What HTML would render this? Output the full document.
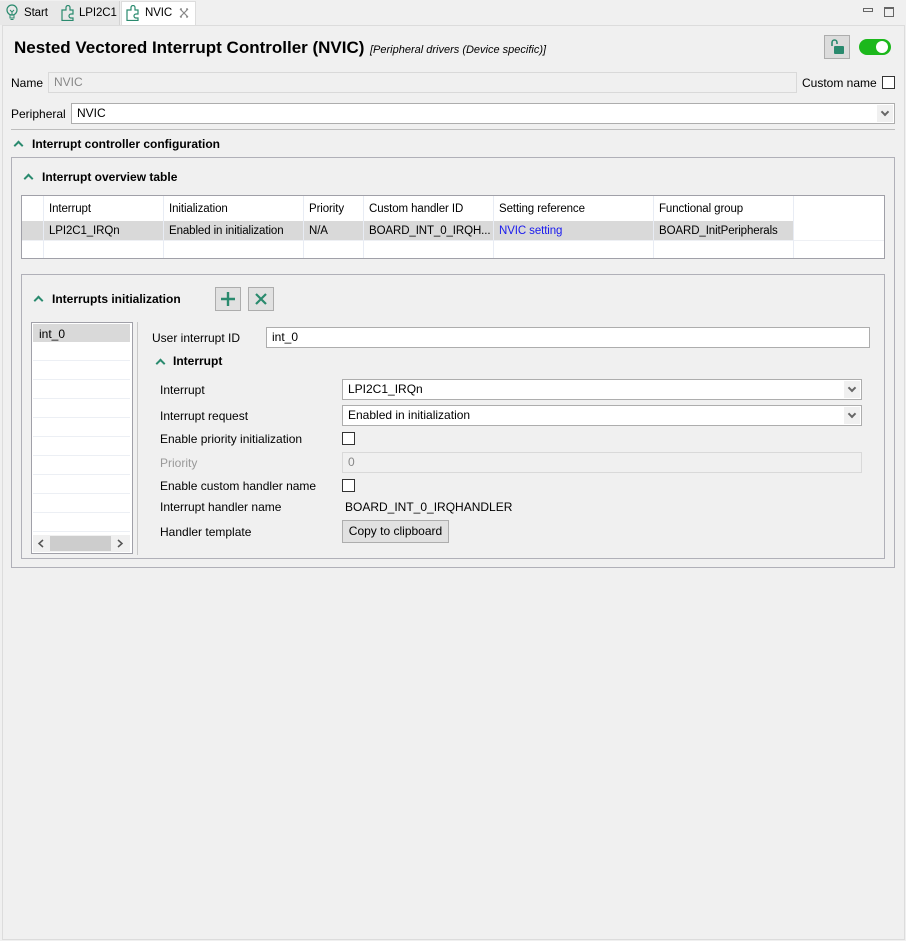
<!DOCTYPE html>
<html><head><meta charset="utf-8"><style>
*{box-sizing:border-box;margin:0;padding:0}
body{width:906px;height:941px;background:#f0f0f0;font-family:"Liberation Sans",sans-serif;font-size:12px;color:#000;position:relative;overflow:hidden}
.a{position:absolute;white-space:nowrap}
.inp{position:absolute;background:#fff;border:1px solid #adadad;height:21px;padding:2px 5px;line-height:15px}
.dis{background:#f0f0f0;border-color:#d9d9d9;color:#888}
.cb{position:absolute;width:13px;height:13px;border:1px solid #333;background:#fff}
.dd{position:absolute;right:1px;top:1px;bottom:1px;width:16px;background:#f0f0f0}
.dd:after{content:"";position:absolute;left:5px;top:4px;width:4px;height:4px;border-right:2px solid #666;border-bottom:2px solid #666;transform:rotate(45deg)}
.chev{position:absolute;width:7px;height:7px;border-left:2.5px solid #2a8a6e;border-top:2.5px solid #2a8a6e;transform:rotate(45deg)}
.b{font-weight:bold}
.lbl{position:absolute;left:160px}
.t{font-size:11.5px;letter-spacing:-0.1px;margin-top:1px}
</style></head><body>
<div class="a" style="left:0;top:0;width:906px;height:25px;background:#f0f0f0"></div>
<div class="a" style="left:0;top:1px;width:120px;height:24px;background:#e8e8e8;border-right:1px solid #d4d4d4"></div>
<div class="a" style="left:121px;top:1px;width:75px;height:25px;background:#fff;border:1px solid #ddd;border-bottom:none"></div>
<svg class="a" style="left:6px;top:4px" width="12" height="17" viewBox="0 0 12 17"><circle cx="6" cy="6" r="5" fill="none" stroke="#2a8a6e" stroke-width="1.2"/><path d="M4 11v3h4v-3M4.5 15.5h3M4 6l2 2 2-2M6 8v3" fill="none" stroke="#2a8a6e" stroke-width="1"/></svg>
<span class="a t" style="left:24px;top:6px">Start</span>
<svg class="a" style="left:61px;top:5px" width="14" height="16" viewBox="0 0 14 16"><path d="M1 5h4V2.5a2 2 0 0 1 4 0V5h3v4h-2a2 2 0 0 0 0 4h2v2.5H1z" fill="none" stroke="#2a8a6e" stroke-width="1.2"/></svg>
<span class="a t" style="left:79px;top:6px">LPI2C1</span>
<svg class="a" style="left:126px;top:5px" width="14" height="16" viewBox="0 0 14 16"><path d="M1 5h4V2.5a2 2 0 0 1 4 0V5h3v4h-2a2 2 0 0 0 0 4h2v2.5H1z" fill="none" stroke="#2a8a6e" stroke-width="1.2"/></svg>
<span class="a t" style="left:145px;top:6px">NVIC</span>
<svg class="a" style="left:179px;top:8px" width="10" height="10" viewBox="0 0 10 10"><path d="M1 1l8 8M9 1L1 9M1 1h2M7 1h2M1 9h2M7 9h2" stroke="#888" stroke-width="1.2"/></svg>
<div class="a" style="left:863px;top:8px;width:10px;height:4px;border:1px solid #666"></div>
<div class="a" style="left:884px;top:7px;width:10px;height:10px;border:1px solid #666;border-top-width:2px"></div>
<div class="a" style="left:2px;top:25px;width:903px;height:915px;border:1px solid #dcdcdc;background:#f0f0f0"></div>
<span class="a b" style="left:14px;top:38px;font-size:17px">Nested Vectored Interrupt Controller (NVIC)</span>
<span class="a" style="left:370px;top:44px;font-style:italic;font-size:11px">[Peripheral drivers (Device specific)]</span>
<div class="a" style="left:824px;top:35px;width:26px;height:24px;border:1px solid #adadad;background:#dcdcdc"></div>
<svg class="a" style="left:829px;top:38px" width="16" height="18" viewBox="0 0 16 18"><path d="M3 8V4.5a2.5 2.5 0 0 1 5 0V6" fill="none" stroke="#2a8a6e" stroke-width="1.6"/><rect x="5" y="8" width="10" height="8" rx="1" fill="#2a8a6e"/></svg>
<div class="a" style="left:859px;top:39px;width:32px;height:16px;border-radius:8px;background:#1cb81c"></div>
<div class="a" style="left:876px;top:41px;width:12px;height:12px;border-radius:6px;background:#fff"></div>
<span class="a" style="left:11px;top:76px">Name</span>
<div class="inp dis" style="left:48px;top:72px;width:749px">NVIC</div>
<span class="a" style="left:802px;top:76px">Custom name</span>
<div class="cb" style="left:882px;top:76px"></div>
<span class="a" style="left:11px;top:107px">Peripheral</span>
<div class="inp" style="left:71px;top:103px;width:824px">NVIC<div class="dd"></div></div>
<div class="a" style="left:11px;top:129px;width:884px;height:1px;background:#bdbdbd"></div>
<div class="chev" style="left:15px;top:142px"></div>
<span class="a b" style="left:32px;top:137px">Interrupt controller configuration</span>
<div class="a" style="left:11px;top:157px;width:884px;height:411px;border:1px solid #b0b0b8"></div>
<div class="chev" style="left:25px;top:175px"></div>
<span class="a b" style="left:42px;top:170px">Interrupt overview table</span>
<div class="a" style="left:21px;top:195px;width:864px;height:64px;border:1px solid #a0a0a8;background:#fff"></div>
<div class="a" style="left:22px;top:221px;width:771px;height:19px;background:#d9d9d9"></div>
<div class="a" style="left:22px;top:240px;width:862px;height:1px;background:#eef0f4"></div>
<div class="a" style="left:43px;top:196px;width:1px;height:62px;background:#e8ecf4"></div>
<div class="a" style="left:163px;top:196px;width:1px;height:62px;background:#e8ecf4"></div>
<div class="a" style="left:303px;top:196px;width:1px;height:62px;background:#e8ecf4"></div>
<div class="a" style="left:363px;top:196px;width:1px;height:62px;background:#e8ecf4"></div>
<div class="a" style="left:493px;top:196px;width:1px;height:62px;background:#e8ecf4"></div>
<div class="a" style="left:653px;top:196px;width:1px;height:62px;background:#e8ecf4"></div>
<div class="a" style="left:793px;top:196px;width:1px;height:62px;background:#e8ecf4"></div>
<span class="a t" style="left:49px;top:202px">Interrupt</span>
<span class="a t" style="left:169px;top:202px">Initialization</span>
<span class="a t" style="left:309px;top:202px">Priority</span>
<span class="a t" style="left:369px;top:202px">Custom handler ID</span>
<span class="a t" style="left:499px;top:202px">Setting reference</span>
<span class="a t" style="left:659px;top:202px">Functional group</span>
<span class="a t" style="left:49px;top:224px">LPI2C1_IRQn</span>
<span class="a t" style="left:169px;top:224px">Enabled in initialization</span>
<span class="a t" style="left:309px;top:224px">N/A</span>
<span class="a t" style="left:369px;top:224px;width:122px;overflow:hidden">BOARD_INT_0_IRQH...</span>
<span class="a t" style="left:499px;top:224px;color:#1a1aee">NVIC setting</span>
<span class="a t" style="left:659px;top:224px">BOARD_InitPeripherals</span>
<div class="a" style="left:21px;top:274px;width:864px;height:285px;border:1px solid #b0b0b8"></div>
<div class="chev" style="left:35px;top:297px"></div>
<span class="a b" style="left:52px;top:292px">Interrupts initialization</span>
<div class="a" style="left:215px;top:287px;width:26px;height:24px;border:1px solid #adadad;background:#e1e1e1"></div>
<svg class="a" style="left:220px;top:291px" width="16" height="16" viewBox="0 0 16 16"><path d="M8 1v14M1 8h14" stroke="#2a8a6e" stroke-width="2.4"/></svg>
<div class="a" style="left:248px;top:287px;width:26px;height:24px;border:1px solid #adadad;background:#e1e1e1"></div>
<svg class="a" style="left:254px;top:292px" width="14" height="14" viewBox="0 0 14 14"><path d="M2 2l10 10M12 2L2 12" stroke="#2a8a6e" stroke-width="2.2"/></svg>
<div class="a" style="left:31px;top:322px;width:102px;height:232px;border:1px solid #a0a0a8;background:#fff"></div>
<div class="a" style="left:33px;top:324px;width:97px;height:18px;background:#d9d9d9"></div>
<span class="a" style="left:39px;top:327px">int_0</span>
<div class="a" style="left:33px;top:342px;width:97px;height:190px;background:repeating-linear-gradient(to bottom,transparent 0,transparent 18px,#eceff4 18px,#eceff4 19px)"></div>
<div class="a" style="left:33px;top:535px;width:97px;height:17px;background:#f0f0f0"></div>
<div class="a" style="left:50px;top:536px;width:61px;height:15px;background:#cdcdcd"></div>
<svg class="a" style="left:37px;top:539px" width="8" height="9" viewBox="0 0 8 9"><path d="M6 1L2 4.5 6 8" fill="none" stroke="#555" stroke-width="1.5"/></svg>
<svg class="a" style="left:116px;top:539px" width="8" height="9" viewBox="0 0 8 9"><path d="M2 1l4 3.5L2 8" fill="none" stroke="#555" stroke-width="1.5"/></svg>
<div class="a" style="left:137px;top:322px;width:1px;height:233px;background:#c8c8c8"></div>
<span class="a" style="left:152px;top:331px">User interrupt ID</span>
<div class="inp" style="left:266px;top:327px;width:604px">int_0</div>
<div class="chev" style="left:157px;top:360px"></div>
<span class="a b" style="left:173px;top:354px">Interrupt</span>
<span class="lbl" style="top:383px">Interrupt</span>
<div class="inp" style="left:342px;top:379px;width:520px;height:21px">LPI2C1_IRQn<div class="dd"></div></div>
<span class="lbl" style="top:409px">Interrupt request</span>
<div class="inp" style="left:342px;top:405px;width:520px;height:21px">Enabled in initialization<div class="dd"></div></div>
<span class="lbl" style="top:432px">Enable priority initialization</span>
<div class="cb" style="left:342px;top:432px"></div>
<span class="lbl" style="top:456px;color:#999">Priority</span>
<div class="inp dis" style="left:342px;top:452px;width:520px">0</div>
<span class="lbl" style="top:479px">Enable custom handler name</span>
<div class="cb" style="left:342px;top:479px"></div>
<span class="lbl" style="top:500px">Interrupt handler name</span>
<span class="a" style="left:345px;top:500px">BOARD_INT_0_IRQHANDLER</span>
<span class="lbl" style="top:525px">Handler template</span>
<div class="a" style="left:342px;top:520px;width:107px;height:23px;border:1px solid #adadad;background:#e1e1e1;text-align:center;line-height:21px">Copy to clipboard</div>
</body></html>
